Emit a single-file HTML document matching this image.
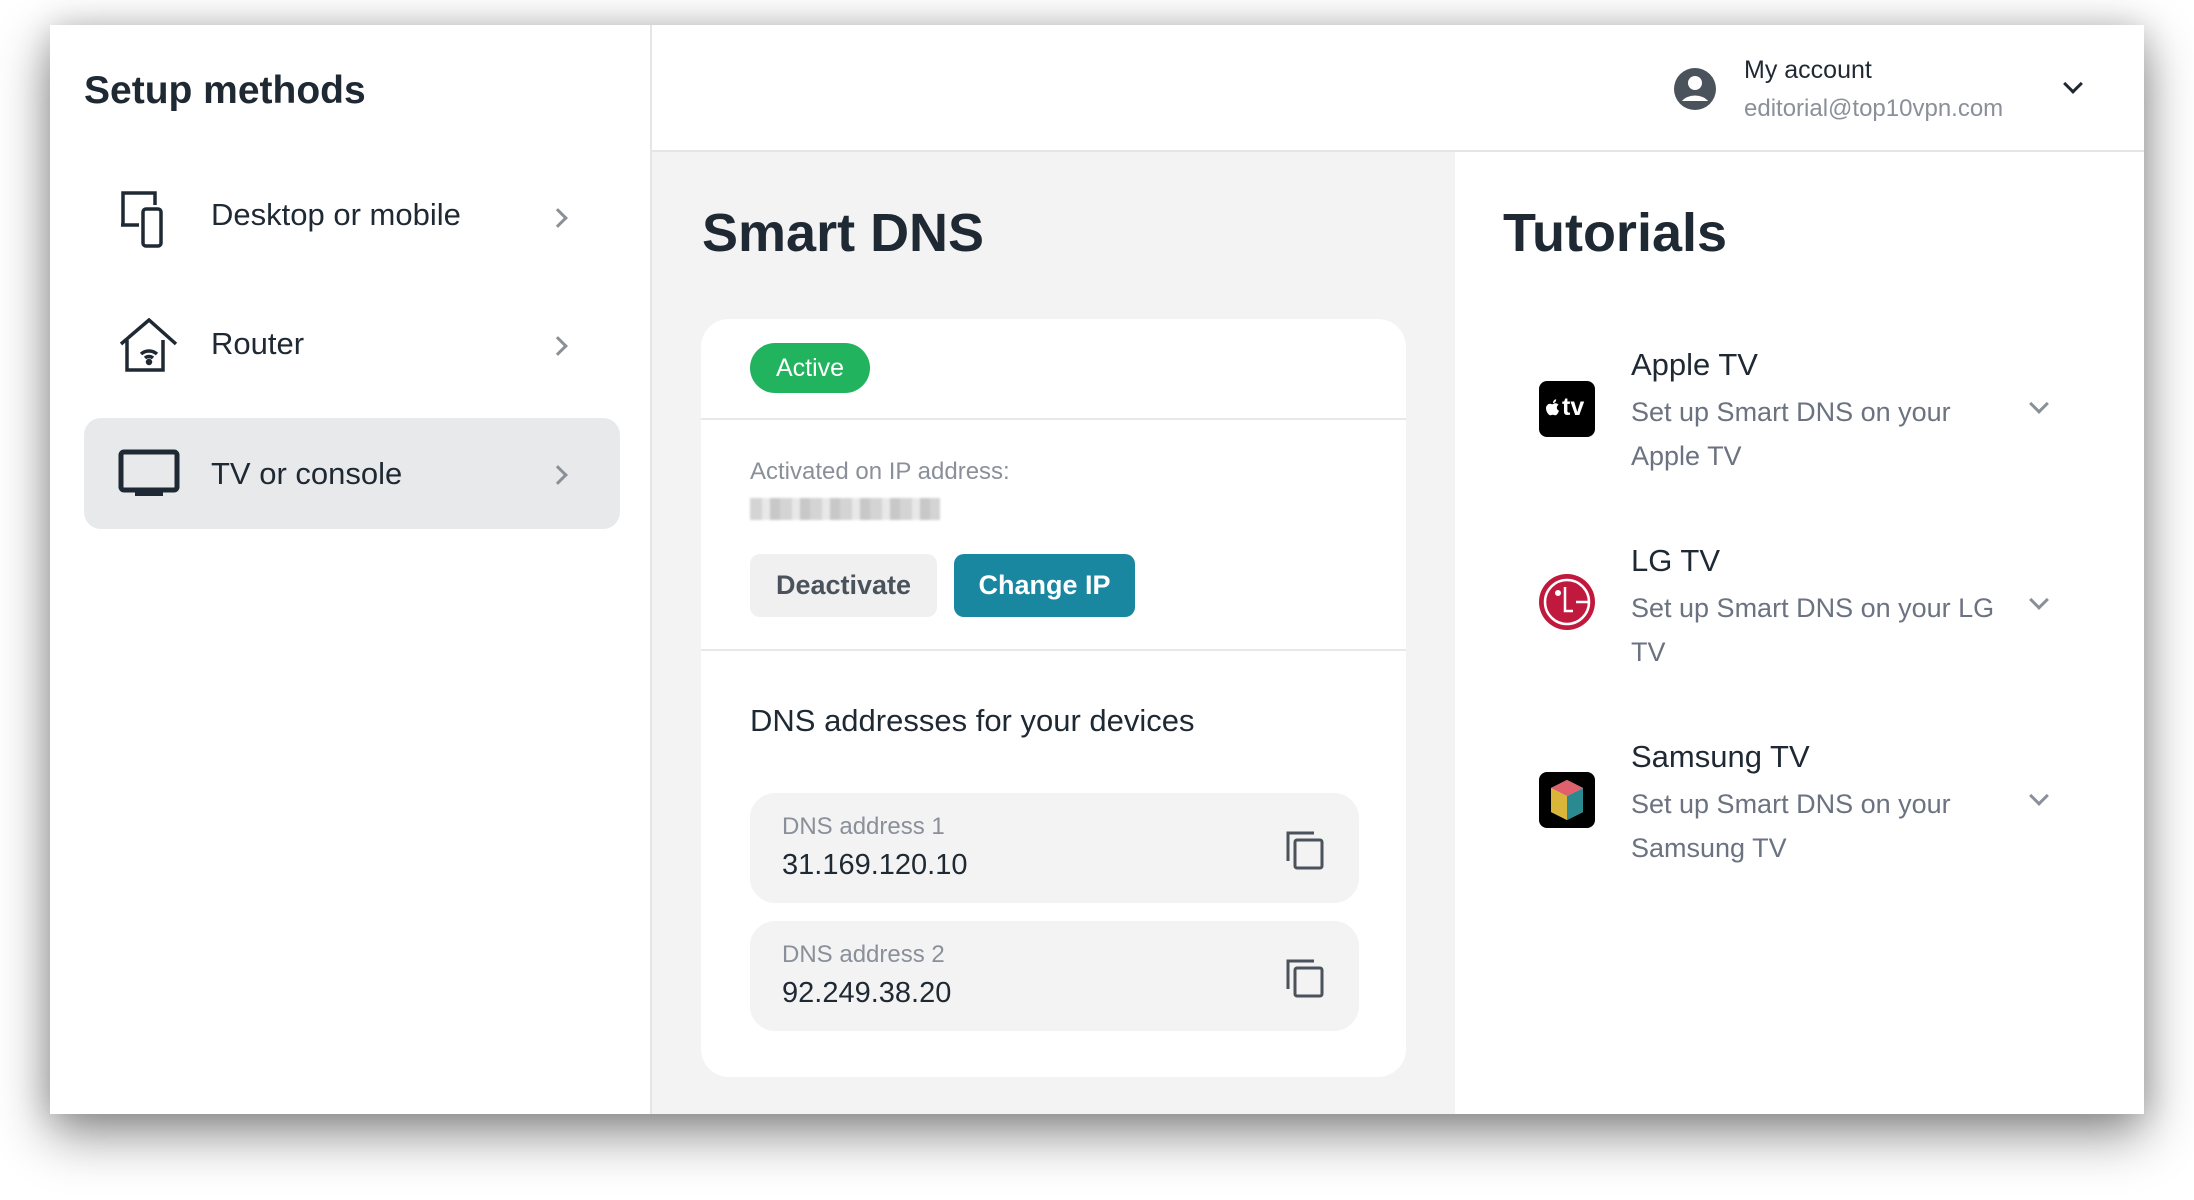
<!DOCTYPE html>
<html><head><meta charset="utf-8"><style>
*{box-sizing:border-box;margin:0;padding:0}
body{width:2194px;height:1200px;background:#fff;font-family:"Liberation Sans",sans-serif;color:#1f2933;position:relative;overflow:hidden}
.win{position:absolute;left:50px;top:25px;width:2094px;height:1089px;background:#fff;box-shadow:0 20px 50px rgba(0,0,0,.45),0 0 30px rgba(0,0,0,.15);overflow:hidden}
.abs{position:absolute}
.side{left:0;top:0;width:602px;height:1089px;border-right:2px solid #e5e5e5;background:#fff}
.mid{left:602px;top:127px;width:803px;height:962px;background:#f3f3f3}
.hdr{left:602px;top:0;width:1492px;height:127px;border-bottom:2px solid #e5e5e5;background:#fff}
.t{position:absolute;white-space:nowrap}
.item{font-size:31px;color:#1f2933}
.chev{position:absolute;width:14px;height:14px;border-right:3px solid #8a9099;border-bottom:3px solid #8a9099}
.card{left:651px;top:294px;width:705px;height:758px;background:#fff;border-radius:28px}
.dns{position:absolute;left:49px;width:609px;height:110px;background:#f3f3f3;border-radius:25px}
.sub{font-size:27px;color:#6b7280;line-height:44px;white-space:normal;width:375px}
</style></head><body>
<div class="win">
 <div class="abs side">
  <div class="t" style="left:34px;top:44px;font-size:39px;font-weight:bold">Setup methods</div>
  <div class="abs" style="left:34px;top:393px;width:536px;height:111px;background:#e8e9eb;border-radius:17px"></div>
  <svg class="abs" style="left:69px;top:164px" width="56" height="60" viewBox="0 0 56 60" fill="none" stroke="#1f2933" stroke-width="3.5"><path d="M4 36V4h32v12M2 36h18"/><rect x="24" y="20" width="18" height="37" rx="3"/></svg>
  <div class="t item" style="left:161px;top:172px">Desktop or mobile</div>
  <svg class="abs" style="left:68px;top:293px" width="60" height="56" viewBox="0 0 60 56" fill="none" stroke="#1f2933" stroke-width="3.5"><path d="M3 26L31 2 58 26M9 22v30h36V22"/><path d="M23 36a12 12 0 0 1 16 0M27 40a6 6 0 0 1 8 0"/><circle cx="31" cy="44" r="1.5" fill="#1f2933"/></svg>
  <div class="t item" style="left:161px;top:301px">Router</div>
  <svg class="abs" style="left:68px;top:424px" width="62" height="50" viewBox="0 0 62 50"><rect x="3" y="3" width="56" height="38" rx="3" fill="none" stroke="#1f2933" stroke-width="5"/><rect x="17" y="40" width="28" height="7" fill="#1f2933"/></svg>
  <div class="t item" style="left:161px;top:431px">TV or console</div>
  <div class="chev" style="left:501px;top:186px;transform:rotate(-45deg)"></div>
  <div class="chev" style="left:501px;top:314px;transform:rotate(-45deg)"></div>
  <div class="chev" style="left:501px;top:443px;transform:rotate(-45deg)"></div>
 </div>
 <div class="abs hdr">
  <svg class="abs" style="left:1021px;top:42px" width="44" height="44" viewBox="0 0 44 44"><circle cx="22" cy="22" r="21" fill="#4a525c"/><circle cx="22" cy="16" r="7" fill="#fff"/><path d="M9 34a15 11 0 0 1 26 0" fill="#fff"/></svg>
  <div class="t" style="left:1092px;top:31px;font-size:25px;color:#1f2933">My account</div>
  <div class="t" style="left:1092px;top:70px;font-size:24px;color:#8a9099">editorial@top10vpn.com</div>
  <div class="chev" style="left:1414px;top:52px;transform:rotate(45deg);border-color:#1f2933"></div>
 </div>
 <div class="abs mid"></div>
 <div class="t" style="left:652px;top:177px;font-size:54px;font-weight:bold">Smart DNS</div>
 <div class="abs card">
  <div class="abs" style="left:49px;top:24px;width:120px;height:50px;background:#22b35e;border-radius:25px;color:#fff;font-size:25px;text-align:center;line-height:50px">Active</div>
  <div class="abs" style="left:0;top:99px;width:705px;height:2px;background:#e8e8e8"></div>
  <div class="t" style="left:49px;top:139px;font-size:24px;color:#8a9099">Activated on IP address:</div>
  <div class="abs" style="left:49px;top:179px;width:190px;height:22px;background:repeating-linear-gradient(90deg,#d4d4d4 0 12px,#e8e8e8 12px 20px,#c8c8c8 20px 30px);filter:blur(1px)"></div>
  <div class="abs" style="left:49px;top:235px;width:187px;height:63px;background:#f0f0f0;border-radius:10px;font-size:27px;font-weight:bold;color:#4a525c;text-align:center;line-height:63px">Deactivate</div>
  <div class="abs" style="left:253px;top:235px;width:181px;height:63px;background:#1a87a0;border-radius:10px;font-size:27px;font-weight:bold;color:#fff;text-align:center;line-height:63px">Change IP</div>
  <div class="abs" style="left:0;top:330px;width:705px;height:2px;background:#e8e8e8"></div>
  <div class="t" style="left:49px;top:384px;font-size:31px">DNS addresses for your devices</div>
  <div class="dns" style="top:498px;top:474px"><div class="t" style="left:32px;top:20px;font-size:24px;color:#8a9099">DNS address 1</div><div class="t" style="left:32px;top:56px;font-size:29px">31.169.120.10</div>
   <svg class="abs" style="left:534px;top:36px" width="42" height="42" viewBox="0 0 42 42" fill="none" stroke="#4a525c" stroke-width="3"><path d="M4 32V4h26"/><rect x="11" y="11" width="27" height="28" rx="2"/></svg></div>
  <div class="dns" style="top:602px"><div class="t" style="left:32px;top:20px;font-size:24px;color:#8a9099">DNS address 2</div><div class="t" style="left:32px;top:56px;font-size:29px">92.249.38.20</div>
   <svg class="abs" style="left:534px;top:36px" width="42" height="42" viewBox="0 0 42 42" fill="none" stroke="#4a525c" stroke-width="3"><path d="M4 32V4h26"/><rect x="11" y="11" width="27" height="28" rx="2"/></svg></div>
 </div>
 <div class="t" style="left:1453px;top:177px;font-size:54px;font-weight:bold">Tutorials</div>
 <!-- Apple -->
 <div class="abs" style="left:1489px;top:356px;width:56px;height:56px;background:#000;border-radius:8px"></div>
 <svg class="abs" style="left:1495px;top:372px" width="16" height="22" viewBox="0 0 16 22"><path d="M8 7c1.5-1 4-1.3 5.5.8-2.5 1.6-2 5 .5 6-.7 2-2 4.5-3.6 4.5-1 0-1.5-.6-2.6-.6S6.3 18.3 5.3 18.3C3.5 18.3 1 14.5 1 11.3 1 7.7 4.5 6 6.3 7 7 7.4 7.6 7.3 8 7z" fill="#fff"/><path d="M8 6c0-2 1.3-3.6 3.2-3.8C11.2 4.3 9.8 6 8 6z" fill="#fff"/></svg>
 <div class="t" style="left:1512px;top:368px;font-size:25px;font-weight:bold;color:#fff">tv</div>
 <div class="t" style="left:1581px;top:322px;font-size:31px">Apple TV</div>
 <div class="t sub" style="left:1581px;top:365px">Set up Smart DNS on your Apple TV</div>
 <div class="chev" style="left:1982px;top:372px;transform:rotate(45deg)"></div>
 <!-- LG -->
 <svg class="abs" style="left:1488px;top:548px" width="58" height="58" viewBox="0 0 58 58"><circle cx="29" cy="29" r="28" fill="#c1193e"/><circle cx="29" cy="29" r="22" fill="none" stroke="#fff" stroke-width="2.5"/><circle cx="20" cy="20" r="3" fill="#fff"/><path d="M27 14v24h8M38 29h13" stroke="#fff" stroke-width="2.5" fill="none"/></svg>
 <div class="t" style="left:1581px;top:518px;font-size:31px">LG TV</div>
 <div class="t sub" style="left:1581px;top:561px">Set up Smart DNS on your LG TV</div>
 <div class="chev" style="left:1982px;top:568px;transform:rotate(45deg)"></div>
 <!-- Samsung -->
 <div class="abs" style="left:1489px;top:747px;width:56px;height:56px;background:#000;border-radius:8px"></div>
 <svg class="abs" style="left:1493px;top:750px" width="48" height="50" viewBox="0 0 48 50"><path d="M24 5l16 8v24l-16 8-16-8V13z" fill="#e5e5e5"/><path d="M8 13l16 8V45L8 37z" fill="#d9b63a"/><path d="M24 21l16-8v24l-16 8z" fill="#2b8a8f"/><path d="M8 13l16-8 16 8-16 8z" fill="#e0606b"/></svg>
 <div class="t" style="left:1581px;top:714px;font-size:31px">Samsung TV</div>
 <div class="t sub" style="left:1581px;top:757px">Set up Smart DNS on your Samsung TV</div>
 <div class="chev" style="left:1982px;top:764px;transform:rotate(45deg)"></div>
</div>
</body></html>
